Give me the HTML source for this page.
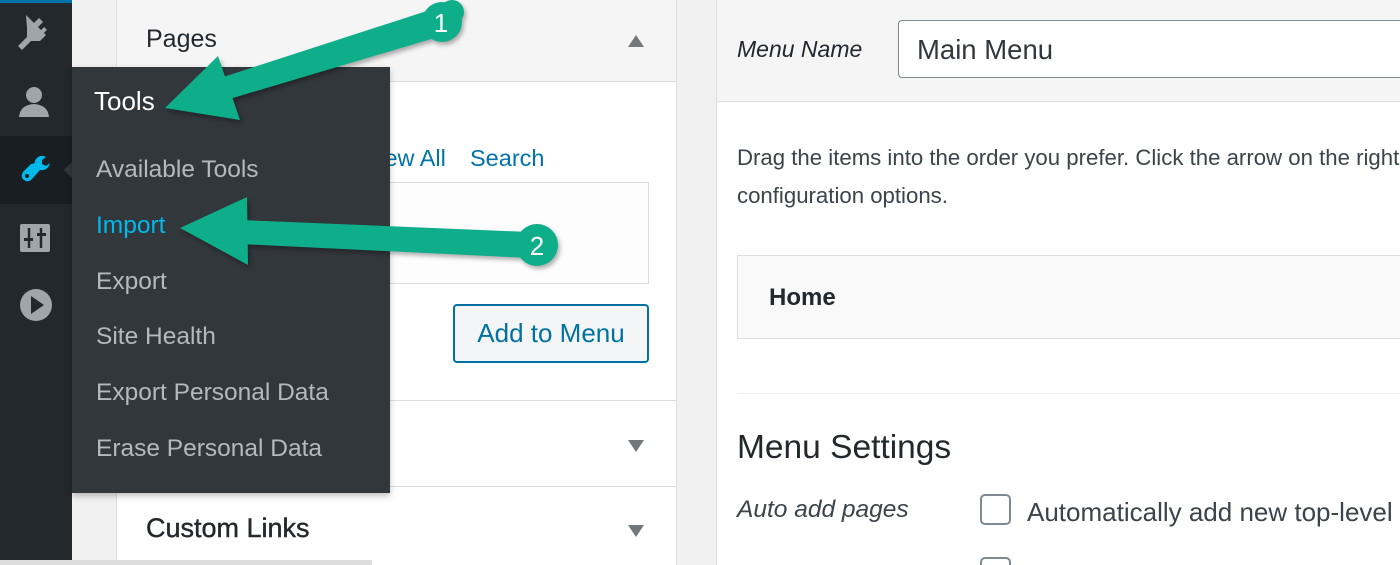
<!DOCTYPE html>
<html><head><meta charset="utf-8"><style>
*{margin:0;padding:0;box-sizing:border-box}
html,body{width:1400px;height:565px;overflow:hidden}
body{background:#f1f1f1;font-family:"Liberation Sans",sans-serif;position:relative}
#w{position:absolute;left:0;top:0;width:1400px;height:565px;overflow:hidden}
.a{position:absolute;white-space:nowrap}
</style></head><body><div id="w">
<!-- sidebar -->
<div class="a" style="left:0;top:0;width:72px;height:565px;background:#23282d"></div>
<div class="a" style="left:0;top:0;width:72px;height:3px;background:#0073aa"></div>
<div class="a" style="left:0;top:136px;width:72px;height:68px;background:#191e23"></div>
<svg class="a" style="left:0;top:0" width="72" height="340">
 <g fill="#a0a5aa">
  <path d="M26 15 L34 23 L39 18 L43 22 L38 27 L46 35 L40 41 L31 41 L22 50 L18 46 L27 37 L27 28Z"/>
  <rect x="33" y="20" width="4" height="11" transform="rotate(45 35 25)"/>
  <rect x="40" y="27" width="4" height="11" transform="rotate(45 42 32)"/>
  <circle cx="34" cy="95" r="8"/>
  <path d="M19 117 Q20 105 34 104 Q48 105 49 117Z"/>
  <rect x="20" y="224" width="30" height="28" rx="2"/>
  <circle cx="36" cy="305" r="16"/>
 </g>
 <path d="M31 164 L23 172 Q20 177 24 180 Q28 183 32 179 L40 170 Q48 171 50 163 L46 166 L42 164 L42 160 L46 157 Q40 154 36 159 Q34 162 35 163Z" fill="#00b9eb"/>
 <circle cx="27" cy="176" r="2" fill="#191e23"/>
 <g stroke="#23282d" stroke-width="2.5"><line x1="29" y1="228" x2="29" y2="248"/><line x1="41" y1="228" x2="41" y2="248"/></g>
 <g fill="#23282d"><rect x="24" y="238" width="9" height="3"/><rect x="37" y="233" width="9" height="3"/></g>
 <path d="M31 296 L31 314 L44 305Z" fill="#23282d"/>
 <path d="M72 162 L64 170 L72 178Z" fill="#32373c"/>
</svg>
<!-- left panel -->
<div class="a" style="left:116px;top:0;width:561px;height:565px;background:#fff;border-left:1px solid #ddd;border-right:1px solid #ddd"></div>
<div class="a" style="left:117px;top:0;width:559px;height:82px;background:#f5f5f5;border-bottom:1px solid #ddd"></div>
<div class="a" style="left:146px;top:25px;font-size:25px;color:#23282d">Pages</div>
<div class="a" style="left:628px;top:35px;width:0;height:0;border-left:8px solid transparent;border-right:8px solid transparent;border-bottom:12px solid #72777c"></div>
<div class="a" style="left:364px;top:145px;font-size:23.5px;color:#0073aa">View All</div>
<div class="a" style="left:470px;top:145px;font-size:23.5px;color:#0073aa">Search</div>
<div class="a" style="left:330px;top:182px;width:319px;height:102px;border:1px solid #ddd;background:#fdfdfd"></div>
<div class="a" style="left:453px;top:304px;width:196px;height:59px;border:2px solid #0071a1;border-radius:4px;background:#f3f5f6;color:#0071a1;font-size:26px;text-align:center;line-height:55px">Add to Menu</div>
<div class="a" style="left:117px;top:400px;width:559px;height:1px;background:#ddd"></div>
<div class="a" style="left:628px;top:440px;width:0;height:0;border-left:8px solid transparent;border-right:8px solid transparent;border-top:12px solid #72777c"></div>
<div class="a" style="left:117px;top:486px;width:559px;height:1px;background:#ddd"></div>
<div class="a" style="left:146px;top:513px;font-size:27px;color:#23282d;-webkit-text-stroke:0.4px #23282d">Custom Links</div>
<div class="a" style="left:628px;top:525px;width:0;height:0;border-left:8px solid transparent;border-right:8px solid transparent;border-top:12px solid #72777c"></div>
<div class="a" style="left:0;top:560px;width:372px;height:5px;background:#ddd"></div>
<!-- right panel -->
<div class="a" style="left:716px;top:0;width:684px;height:565px;background:#fff;border-left:1px solid #ddd"></div>
<div class="a" style="left:717px;top:0;width:683px;height:102px;background:#f5f5f5;border-bottom:1px solid #ddd"></div>
<div class="a" style="left:737px;top:36px;font-size:23px;font-style:italic;color:#23282d">Menu Name</div>
<div class="a" style="left:898px;top:20px;width:520px;height:58px;border:1px solid #7e8993;border-radius:4px;background:#fff"></div>
<div class="a" style="left:917px;top:34px;font-size:27.5px;color:#32373c">Main Menu</div>
<div class="a" style="left:737px;top:139px;font-size:22.2px;color:#3c434a;line-height:38px">Drag the items into the order you prefer. Click the arrow on the right of the item<br>configuration options.</div>
<div class="a" style="left:737px;top:255px;width:680px;height:84px;border:1px solid #ddd;background:#f9f9f9"></div>
<div class="a" style="left:769px;top:284px;font-size:24px;font-weight:bold;color:#23282d">Home</div>
<div class="a" style="left:737px;top:393px;width:680px;height:1px;background:#eee"></div>
<div class="a" style="left:737px;top:429px;font-size:33.5px;color:#23282d">Menu Settings</div>
<div class="a" style="left:737px;top:496px;font-size:24.5px;font-style:italic;color:#3c434a">Auto add pages</div>
<div class="a" style="left:980px;top:494px;width:31px;height:31px;border:2px solid #7e8993;border-radius:5px"></div>
<div class="a" style="left:1027px;top:497px;font-size:26px;color:#3c434a">Automatically add new top-level pages</div>
<div class="a" style="left:980px;top:557px;width:31px;height:8px;border:2px solid #7e8993;border-bottom:none;border-radius:5px 5px 0 0"></div>
<!-- flyout -->
<div class="a" style="left:72px;top:67px;width:318px;height:426px;background:#32373c;box-shadow:0 3px 6px rgba(0,0,0,.25)"></div>
<div class="a" style="left:94px;top:86px;font-size:26px;color:#fff">Tools</div>
<div class="a" style="left:96px;top:156px;font-size:24.5px;color:#b4b9be">Available Tools</div>
<div class="a" style="left:96px;top:212px;font-size:24.5px;color:#00b9eb">Import</div>
<div class="a" style="left:96px;top:268px;font-size:24.5px;color:#b4b9be">Export</div>
<div class="a" style="left:96px;top:323px;font-size:24.5px;color:#b4b9be">Site Health</div>
<div class="a" style="left:96px;top:379px;font-size:24.5px;color:#b4b9be">Export Personal Data</div>
<div class="a" style="left:96px;top:435px;font-size:24.5px;color:#b4b9be">Erase Personal Data</div>
<!-- arrows -->
<svg class="a" style="left:0;top:0" width="1400" height="565">
 <g fill="#0fae8b" style="filter:drop-shadow(2px 3px 2px rgba(0,0,0,.3))">
  <path d="M214 80 L436 8 L448 34 L226 100Z"/>
  <path d="M218 56 L165 108 L240 120Z"/>
  <circle cx="442" cy="22" r="20"/>
  <circle cx="452" cy="12" r="12"/>
  <path d="M240 220 L530 232 L530 258 L240 244Z"/>
  <path d="M247 197 L180 228 L248 265Z"/>
  <circle cx="537" cy="245" r="21"/>
 </g>
 <g fill="#fff" font-family="Liberation Sans,sans-serif" font-size="26" text-anchor="middle">
  <text x="441" y="32">1</text><text x="537" y="255">2</text>
 </g>
</svg>
</div></body></html>
